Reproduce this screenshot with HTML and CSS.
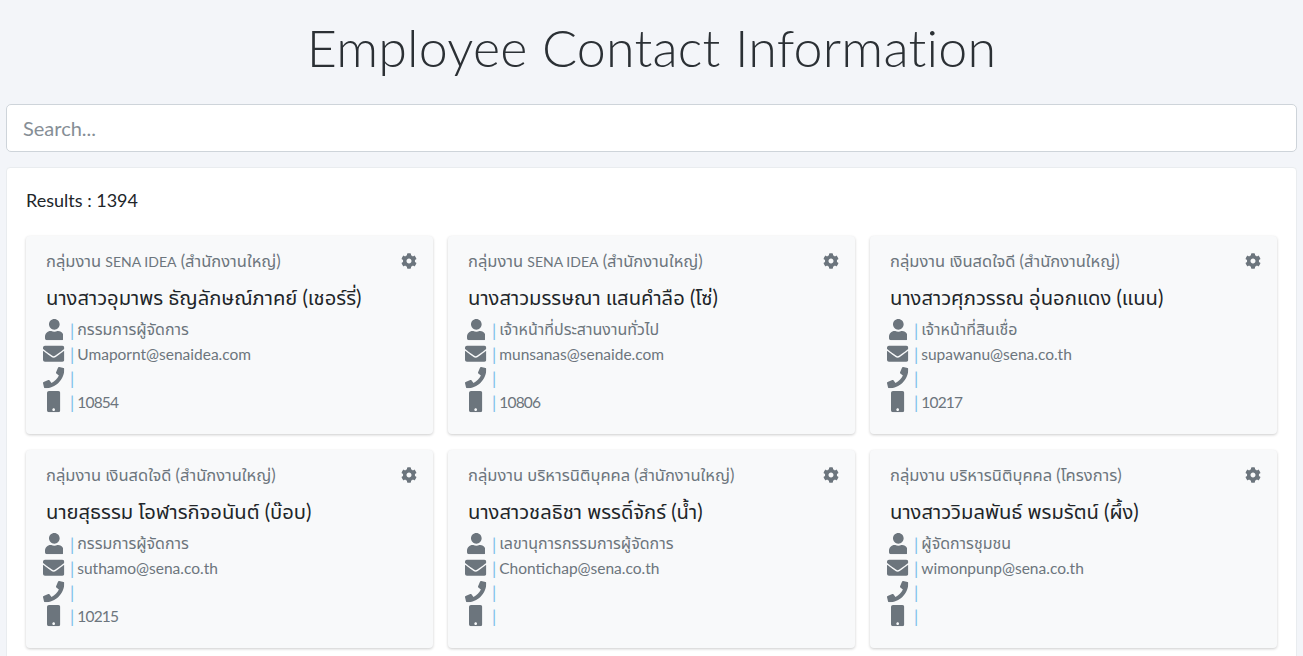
FILE: index.html
```html
<!DOCTYPE html>
<html lang="th">
<head>
<meta charset="utf-8">
<title>Employee Contact Information</title>
<link rel="stylesheet" href="styles.css">
</head>
<body>
<svg class="sprite" width="0" height="0" aria-hidden="true">
<symbol id="i-user" viewBox="0 0 448 512"><path d="M224 256c70.7 0 128-57.3 128-128S294.7 0 224 0 96 57.3 96 128s57.3 128 128 128zm89.6 32h-16.7c-22.2 10.2-46.9 16-72.9 16s-50.6-5.8-72.9-16h-16.7C60.2 288 0 348.2 0 422.4V464c0 26.5 21.5 48 48 48h352c26.5 0 48-21.5 48-48v-41.6c0-74.2-60.2-134.4-134.4-134.4z"/></symbol>
<symbol id="i-mail" viewBox="0 0 512 512"><path d="M502.3 190.8c3.9-3.1 9.7-.2 9.7 4.7V400c0 26.5-21.5 48-48 48H48c-26.5 0-48-21.5-48-48V195.6c0-5 5.7-7.8 9.7-4.7 22.4 17.4 52.1 39.5 154.1 113.6 21.1 15.4 56.7 47.8 92.2 47.6 35.7.3 72-32.8 92.3-47.6 102-74.1 131.6-96.3 154-113.7zM256 320c23.2.4 56.6-29.2 73.4-41.4 132.7-96.3 142.8-104.7 173.4-128.7 5.8-4.5 9.2-11.5 9.2-18.9v-19c0-26.5-21.5-48-48-48H48C21.5 64 0 85.5 0 112v19c0 7.4 3.4 14.3 9.2 18.9 30.6 23.9 40.7 32.4 173.4 128.7 16.8 12.2 50.2 41.8 73.4 41.4z"/></symbol>
<symbol id="i-phone" viewBox="0 0 512 512"><path d="M493.4 24.6l-104-24c-11.3-2.6-22.9 3.3-27.5 13.9l-48 112c-4.2 9.8-1.4 21.3 6.9 28l60.6 49.6c-36 76.7-98.9 140.5-177.2 177.2l-49.6-60.6c-6.8-8.3-18.2-11.1-28-6.9l-112 48C3.9 366.5-2 378.1.6 389.4l24 104C27.1 504.2 36.7 512 48 512c256.1 0 464-207.5 464-464 0-11.2-7.7-20.9-18.6-23.4z"/></symbol>
<symbol id="i-mobile" viewBox="0 0 320 512"><path d="M272 0H48C21.5 0 0 21.5 0 48v416c0 26.5 21.5 48 48 48h224c26.5 0 48-21.5 48-48V48c0-26.5-21.5-48-48-48zM160 480c-17.7 0-32-14.3-32-32s14.3-32 32-32 32 14.3 32 32-14.3 32-32 32z"/></symbol>
<symbol id="i-cog" viewBox="0 0 512 512"><path d="M487.4 315.7l-42.6-24.6c4.3-23.2 4.3-47 0-70.2l42.6-24.6c4.9-2.8 7.1-8.6 5.5-14-11.1-35.6-30-67.8-54.7-94.6-3.8-4.1-10-5.1-14.8-2.3L380.8 110c-17.9-15.4-38.5-27.3-60.8-35.1V25.8c0-5.6-3.9-10.5-9.4-11.7-36.7-8.2-74.3-7.8-109.2 0-5.5 1.2-9.4 6.1-9.4 11.7V75c-22.2 7.9-42.8 19.8-60.8 35.1L88.7 85.5c-4.9-2.8-11-1.9-14.8 2.3-24.7 26.7-43.6 58.9-54.7 94.6-1.7 5.4.6 11.2 5.5 14L67.3 221c-4.3 23.2-4.3 47 0 70.2l-42.6 24.6c-4.9 2.8-7.1 8.6-5.5 14 11.1 35.6 30 67.8 54.7 94.6 3.8 4.1 10 5.1 14.8 2.3l42.6-24.6c17.9 15.4 38.5 27.3 60.8 35.1v49.2c0 5.6 3.9 10.5 9.4 11.7 36.7 8.2 74.3 7.8 109.2 0 5.5-1.2 9.4-6.1 9.4-11.7v-49.2c22.2-7.9 42.8-19.8 60.8-35.1l42.6 24.6c4.9 2.8 11 1.9 14.8-2.3 24.7-26.7 43.6-58.9 54.7-94.6 1.5-5.5-.7-11.3-5.6-14.1zM256 336c-44.1 0-80-35.9-80-80s35.9-80 80-80 80 35.9 80 80-35.9 80-80 80z"/></symbol>
</svg>
<main class="page">
<h1 class="title">Employee Contact Information</h1>
<input class="search" type="text" placeholder="Search...">
<section class="panel">
<p class="results">Results : 1394</p>
<div class="grid">

<article class="card">
<header class="card-head"><span class="group">กลุ่มงาน <span class="latin">SENA IDEA</span> (สำนักงานใหญ่)</span><svg class="cog"><use href="#i-cog"/></svg></header>
<h2 class="name">นางสาวอุมาพร ธัญลักษณ์ภาคย์ (เชอร์รี่)</h2>
<div class="row"><span class="ico"><svg class="i-user"><use href="#i-user"/></svg></span><span class="sep">|</span><span class="val">กรรมการผู้จัดการ</span></div>
<div class="row"><span class="ico"><svg class="i-mail"><use href="#i-mail"/></svg></span><span class="sep">|</span><span class="val mail">Umapornt@senaidea.com</span></div>
<div class="row"><span class="ico"><svg class="i-phone"><use href="#i-phone"/></svg></span><span class="sep">|</span><span class="val"></span></div>
<div class="row"><span class="ico"><svg class="i-mobile"><use href="#i-mobile"/></svg></span><span class="sep">|</span><span class="val num">10854</span></div>
</article>

<article class="card">
<header class="card-head"><span class="group">กลุ่มงาน <span class="latin">SENA IDEA</span> (สำนักงานใหญ่)</span><svg class="cog"><use href="#i-cog"/></svg></header>
<h2 class="name">นางสาวมรรษณา แสนคำลือ (โซ่)</h2>
<div class="row"><span class="ico"><svg class="i-user"><use href="#i-user"/></svg></span><span class="sep">|</span><span class="val">เจ้าหน้าที่ประสานงานทั่วไป</span></div>
<div class="row"><span class="ico"><svg class="i-mail"><use href="#i-mail"/></svg></span><span class="sep">|</span><span class="val mail">munsanas@senaide.com</span></div>
<div class="row"><span class="ico"><svg class="i-phone"><use href="#i-phone"/></svg></span><span class="sep">|</span><span class="val"></span></div>
<div class="row"><span class="ico"><svg class="i-mobile"><use href="#i-mobile"/></svg></span><span class="sep">|</span><span class="val num">10806</span></div>
</article>

<article class="card">
<header class="card-head"><span class="group">กลุ่มงาน เงินสดใจดี (สำนักงานใหญ่)</span><svg class="cog"><use href="#i-cog"/></svg></header>
<h2 class="name">นางสาวศุภวรรณ อุ่นอกแดง (แนน)</h2>
<div class="row"><span class="ico"><svg class="i-user"><use href="#i-user"/></svg></span><span class="sep">|</span><span class="val">เจ้าหน้าที่สินเชื่อ</span></div>
<div class="row"><span class="ico"><svg class="i-mail"><use href="#i-mail"/></svg></span><span class="sep">|</span><span class="val mail">supawanu@sena.co.th</span></div>
<div class="row"><span class="ico"><svg class="i-phone"><use href="#i-phone"/></svg></span><span class="sep">|</span><span class="val"></span></div>
<div class="row"><span class="ico"><svg class="i-mobile"><use href="#i-mobile"/></svg></span><span class="sep">|</span><span class="val num">10217</span></div>
</article>

<article class="card">
<header class="card-head"><span class="group">กลุ่มงาน เงินสดใจดี (สำนักงานใหญ่)</span><svg class="cog"><use href="#i-cog"/></svg></header>
<h2 class="name">นายสุธรรม โอฬารกิจอนันต์ (บ๊อบ)</h2>
<div class="row"><span class="ico"><svg class="i-user"><use href="#i-user"/></svg></span><span class="sep">|</span><span class="val">กรรมการผู้จัดการ</span></div>
<div class="row"><span class="ico"><svg class="i-mail"><use href="#i-mail"/></svg></span><span class="sep">|</span><span class="val mail">suthamo@sena.co.th</span></div>
<div class="row"><span class="ico"><svg class="i-phone"><use href="#i-phone"/></svg></span><span class="sep">|</span><span class="val"></span></div>
<div class="row"><span class="ico"><svg class="i-mobile"><use href="#i-mobile"/></svg></span><span class="sep">|</span><span class="val num">10215</span></div>
</article>

<article class="card">
<header class="card-head"><span class="group">กลุ่มงาน บริหารนิติบุคคล (สำนักงานใหญ่)</span><svg class="cog"><use href="#i-cog"/></svg></header>
<h2 class="name">นางสาวชลธิชา พรรดิ์จักร์ (น้ำ)</h2>
<div class="row"><span class="ico"><svg class="i-user"><use href="#i-user"/></svg></span><span class="sep">|</span><span class="val">เลขานุการกรรมการผู้จัดการ</span></div>
<div class="row"><span class="ico"><svg class="i-mail"><use href="#i-mail"/></svg></span><span class="sep">|</span><span class="val mail">Chontichap@sena.co.th</span></div>
<div class="row"><span class="ico"><svg class="i-phone"><use href="#i-phone"/></svg></span><span class="sep">|</span><span class="val"></span></div>
<div class="row"><span class="ico"><svg class="i-mobile"><use href="#i-mobile"/></svg></span><span class="sep">|</span><span class="val"></span></div>
</article>

<article class="card">
<header class="card-head"><span class="group">กลุ่มงาน บริหารนิติบุคคล (โครงการ)</span><svg class="cog"><use href="#i-cog"/></svg></header>
<h2 class="name">นางสาววิมลพันธ์ พรมรัตน์ (ผึ้ง)</h2>
<div class="row"><span class="ico"><svg class="i-user"><use href="#i-user"/></svg></span><span class="sep">|</span><span class="val">ผู้จัดการชุมชน</span></div>
<div class="row"><span class="ico"><svg class="i-mail"><use href="#i-mail"/></svg></span><span class="sep">|</span><span class="val mail">wimonpunp@sena.co.th</span></div>
<div class="row"><span class="ico"><svg class="i-phone"><use href="#i-phone"/></svg></span><span class="sep">|</span><span class="val"></span></div>
<div class="row"><span class="ico"><svg class="i-mobile"><use href="#i-mobile"/></svg></span><span class="sep">|</span><span class="val"></span></div>
</article>

</div>
</section>
</main>
</body>
</html>
```
FILE: styles.css
```css
* { box-sizing: border-box; }
html, body { margin: 0; height: 100%; overflow: hidden; }
body {
  background: #f3f5f9;
  color: #212529;
  font-family: "Lato", "Noto Sans", "Noto Sans Thai", "DejaVu Sans", sans-serif;
  font-size: 16px;
}
.sprite { position: absolute; }
svg { fill: currentColor; display: block; }
.page { padding: 0 6px; }
.title {
  margin: 0;
  height: 104px;
  line-height: 94px;
  text-align: center;
  font-size: 52px;
  font-weight: 300;
  font-family: "Lato", "Noto Sans", sans-serif;
  font-variant-ligatures: none;
  letter-spacing: .2px;
  color: #2b3035;
}
.search {
  display: block;
  width: 100%;
  height: 48px;
  padding: 0 16px;
  font: 20px "Lato", "Noto Sans", sans-serif;
  color: #495057;
  background: #fff;
  border: 1px solid #ced4da;
  border-radius: 5px;
  outline: 0;
}
.search::placeholder { color: #868e96; opacity: 1; }
.panel {
  margin-top: 15px;
  padding: 20px 19px;
  background: #fff;
  border: 1px solid #e9ecef;
  border-radius: 4px;
}
.results {
  margin: 0 0 23px;
  height: 25px;
  line-height: 25px;
  font-size: 18px;
  color: #212529;
}
.grid {
  display: grid;
  grid-template-columns: repeat(3, 407px);
  column-gap: 15px;
  row-gap: 16px;
}
.card {
  height: 198px;
  padding: 12px 20px 0;
  background: #f8f9fa;
  border-radius: 4px;
  box-shadow: 0 1px 3px rgba(0, 0, 0, .2);
}
.card-head {
  display: flex;
  justify-content: space-between;
  align-items: center;
  height: 26px;
  color: #6c757d;
  font-size: 16.5px;
}
.latin { font-size: 14px; }
.cog { width: 16px; height: 16px; color: #6c757d; margin-right: -4px; }
.name {
  margin: 10px 0 7px;
  height: 27px;
  line-height: 27px;
  font-size: 20.2px;
  font-weight: 400;
  color: #212529;
}
.row {
  display: flex;
  align-items: center;
  height: 24px;
  margin-left: -3px;
  color: #6c757d;
  font-size: 16px;
}
.mail { font-size: 15.5px; }
.num { font-size: 15.5px; letter-spacing: -.8px; }
.ico { width: 22px; height: 24px; display: flex; align-items: center; justify-content: center; color: #6c757d; }
.i-user { width: 18.67px; height: 21.33px; flex: none; }
.i-mail { width: 21.33px; height: 21.33px; flex: none; }
.i-phone { width: 21.33px; height: 21.33px; flex: none; }
.i-mobile { width: 13.33px; height: 21.33px; flex: none; }
.sep { margin: 0 3px 0 5px; color: #7cbdea; font-size: 17px; line-height: 17px; }
```
